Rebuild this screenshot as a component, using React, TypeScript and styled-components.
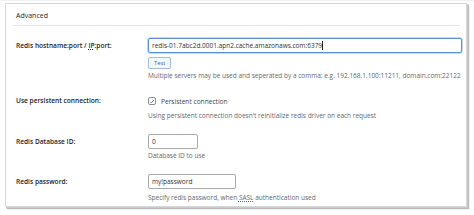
import React from 'react'
import styled, { createGlobalStyle } from 'styled-components'

const GlobalStyle = createGlobalStyle`
  html, body {
    margin: 0;
    padding: 0;
    background: #ffffff;
  }
  body {
    font-family: 'Open Sans', 'Noto Sans', sans-serif;
    color: #1d2327;
  }
`

const Page = styled.div`
  width: 474px;
  height: 215px;
  padding: 2px 0 0 5px;
  box-sizing: border-box;
  border-top: 1px solid #f0f0f1;
`

const Card = styled.div`
  width: 462px;
  height: 204px;
  box-sizing: border-box;
  background: #fff;
  border: 1px solid #d6d7d9;
  box-shadow: 1px 1px 0 #c9cacc, 2px 2px 1px #b8b9bb;
  padding: 0 6px 0 9px;
`

const Heading = styled.h2`
  margin: 0 0 0 -2px;
  padding: 7px 0 4px 3px;
  font-size: 7px;
  line-height: 10px;
  font-weight: 400;
  border-bottom: 1px solid #e6e7e8;
`

const Form = styled.div`
  display: grid;
  grid-template-columns: 133px 1fr;
  margin-top: 12px;
`

const Label = styled.div<{ $line: number }>`
  font-size: 6.6px;
  font-weight: 600;
  line-height: ${p => p.$line}px;
  padding-left: 1px;
  white-space: nowrap;
`

const Field = styled.div<{ $after: number }>`
  display: flex;
  flex-direction: column;
  align-items: flex-start;
  padding-bottom: ${p => p.$after}px;
`

const TextInput = styled.div<{ $width: number; $focus?: boolean }>`
  width: ${p => p.$width}px;
  height: 15px;
  box-sizing: border-box;
  border: 1px solid ${p => (p.$focus ? '#5b8fcf' : '#a7aaad')};
  border-radius: 2px;
  box-shadow: ${p => (p.$focus ? '0 0 0 0.5px #8fb3e0' : 'none')};
  font-size: 6.5px;
  line-height: 13px;
  padding-left: 3px;
  color: #2c3338;
  white-space: nowrap;
  overflow: hidden;
`

const Caret = styled.span`
  display: inline-block;
  width: 0.6px;
  height: 9px;
  background: #1d2327;
  vertical-align: -2px;
`

const TestButton = styled.div`
  margin-top: 4px;
  height: 12px;
  padding: 0 5px;
  box-sizing: border-box;
  border: 1px solid #9fbfdf;
  border-radius: 2px;
  background: #f6f7f7;
  color: #2271b1;
  font-size: 5.8px;
  line-height: 10px;
`

const Desc = styled.p<{ $top: number }>`
  margin: ${p => p.$top}px 0 0;
  font-size: 6.5px;
  line-height: 10px;
  color: #646970;
  white-space: nowrap;
`

const CheckRow = styled.label`
  display: flex;
  align-items: center;
  gap: 5px;
  height: 10px;
  font-size: 6.6px;
  color: #3c434a;
`

const Box = styled.span`
  width: 8px;
  height: 8px;
  box-sizing: border-box;
  border: 1px solid #8c8f94;
  border-radius: 2px;
  display: flex;
  align-items: center;
  justify-content: center;
`

const Abbr = styled.span`
  text-decoration: underline dotted;
  text-underline-offset: 1px;
`

export default function App() {
  return (
    <>
      <GlobalStyle />
      <Page>
        <Card>
          <Heading>Advanced</Heading>
          <Form>
            <Label $line={15}>
              Redis hostname:port / <Abbr>IP</Abbr>:port:
            </Label>
            <Field $after={15}>
              <TextInput $width={314} $focus>
                redis-01.7abc2d.0001.apn2.cache.amazonaws.com:6379
                <Caret />
              </TextInput>
              <TestButton>Test</TestButton>
              <Desc $top={2}>
                Multiple servers may be used and seperated by a comma: e.g. 192.168.1.100:11211, domain.com:22122
              </Desc>
            </Field>

            <Label $line={10}>Use persistent connection:</Label>
            <Field $after={13}>
              <CheckRow>
                <Box>
                  <svg width="7" height="7" viewBox="0 0 10 10">
                    <path d="M1.8 5.2 L4 7.4 L8.4 2.4" fill="none" stroke="#2271b1" strokeWidth="1.4" />
                  </svg>
                </Box>
                Persistent connection
              </CheckRow>
              <Desc $top={5}>Using persistent connection doesn't reinitialize redis driver on each request</Desc>
            </Field>

            <Label $line={15}>Redis Database ID:</Label>
            <Field $after={13}>
              <TextInput $width={50}>0</TextInput>
              <Desc $top={2}>Database ID to use</Desc>
            </Field>

            <Label $line={15}>Redis password:</Label>
            <Field $after={0}>
              <TextInput $width={88}>my!password</TextInput>
              <Desc $top={4}>
                Specify redis password, when <Abbr>SASL</Abbr> authentication used
              </Desc>
            </Field>
          </Form>
        </Card>
      </Page>
    </>
  )
}
